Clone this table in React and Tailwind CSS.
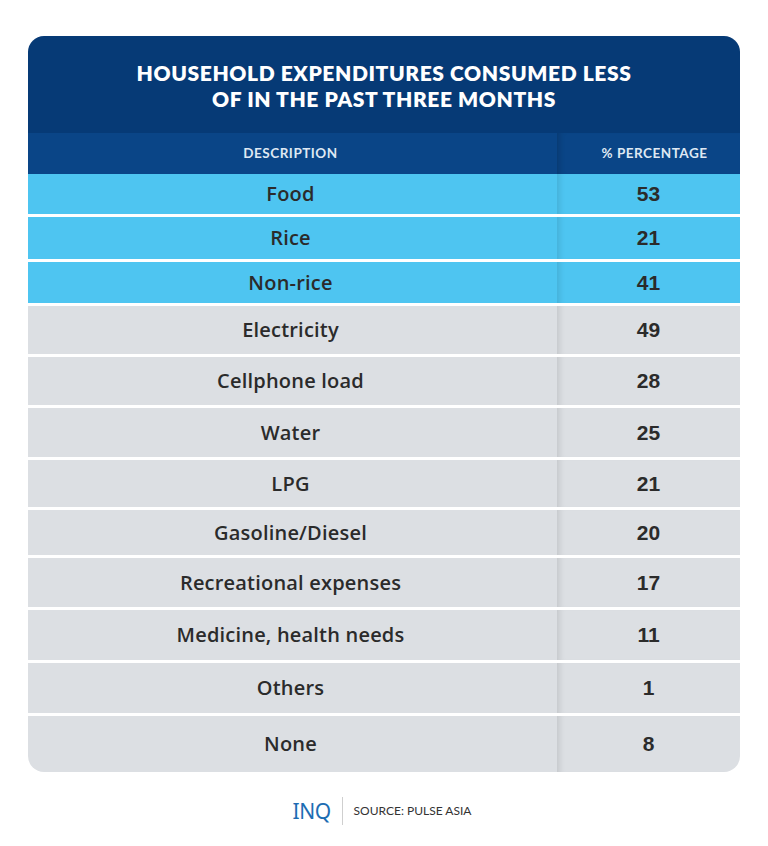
const rows = [
  { label: "Food", value: 53, h: "h-[40px]", blue: true },
  { label: "Rice", value: 21, h: "h-[42px]", blue: true },
  { label: "Non-rice", value: 41, h: "h-[41px]", blue: true },
  { label: "Electricity", value: 49, h: "h-[48px]" },
  { label: "Cellphone load", value: 28, h: "h-[48px]" },
  { label: "Water", value: 25, h: "h-[49px]" },
  { label: "LPG", value: 21, h: "h-[47px]" },
  { label: "Gasoline/Diesel", value: 20, h: "h-[45px]" },
  { label: "Recreational expenses", value: 17, h: "h-[49px]" },
  { label: "Medicine, health needs", value: 11, h: "h-[50px]" },
  { label: "Others", value: 1, h: "h-[50px]" },
  { label: "None", value: 8, h: "h-[56px]" }
];

function Row({ row }) {
  const bg = row.blue ? "bg-[#4ec5f1]" : "bg-[#dcdfe3]";
  return (
    <div className={`flex ${row.h} ${bg}`}>
      <div className="flex flex-1 items-center justify-center pr-[4px] text-[20px] font-[550] tracking-[0.2px] text-[#2b2b2b] [font-family:'Open_Sans',sans-serif]">
        {row.label}
      </div>
      <div className="flex w-[183px] items-center justify-center text-[21px] font-bold text-[#2b2b2b] shadow-[inset_7px_0_6px_-5px_rgba(0,0,0,0.12)] [font-family:'Liberation_Sans',Arial,sans-serif]">
        {row.value}
      </div>
    </div>
  );
}

export default function App() {
  return (
    <div className="min-h-[846px] w-[768px] bg-white pt-[36px]">
      <div className="mx-[28px] w-[712px] overflow-hidden rounded-[16px]">
        <div className="flex h-[97px] flex-col items-center justify-center bg-[#063a76] pt-[3px] text-center text-[21px] font-extrabold leading-[26px] tracking-[0.6px] text-white [font-family:Lato,sans-serif]">
          <div>HOUSEHOLD EXPENDITURES CONSUMED LESS</div>
          <div>OF IN THE PAST THREE MONTHS</div>
        </div>
        <div className="flex h-[41px] bg-[#0a4587] text-[13.5px] font-bold tracking-[0.5px] text-[#dfe8f3] [font-family:Lato,sans-serif]">
          <div className="flex flex-1 items-center justify-center pr-[4px]">DESCRIPTION</div>
          <div className="flex w-[183px] items-center justify-center pl-[12px] shadow-[inset_7px_0_6px_-5px_rgba(0,0,0,0.18)]">% PERCENTAGE</div>
        </div>
        <div className="flex flex-col gap-[3px] bg-white">
          {rows.map((row) => (
            <Row key={row.label} row={row} />
          ))}
        </div>
      </div>
      <div className="mt-[25px] flex items-center justify-center">
        <div className="flex items-center pr-[4px]">
          <span className="text-[21px] leading-none tracking-[-0.5px] text-[#1d6db3] [font-family:'Noto_Sans',sans-serif]">INQ</span>
          <div className="mx-[11px] h-[28px] w-px bg-[#cfcfcf]" />
          <span className="text-[12px] text-[#333] [font-family:Lato,sans-serif]">SOURCE: PULSE ASIA</span>
        </div>
      </div>
    </div>
  );
}
